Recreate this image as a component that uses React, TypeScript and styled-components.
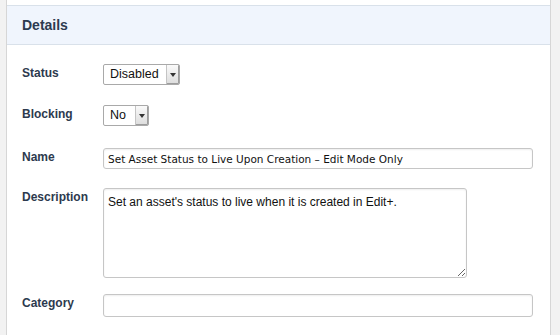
import React from 'react'
import styled, { createGlobalStyle } from 'styled-components'

const GlobalStyle = createGlobalStyle`
  html, body {
    margin: 0;
    padding: 0;
    background: #f2f2f2;
  }
`

const Panel = styled.div`
  margin-left: 6px;
  width: 545px;
  min-height: 335px;
  box-sizing: border-box;
  background: #ffffff;
  border-left: 1px solid #d6d6d6;
  border-right: 1px solid #d6d6d6;
  padding-top: 5px;
  font-family: "Liberation Sans", Arial, sans-serif;
`

const Header = styled.div`
  height: 38px;
  line-height: 38px;
  padding-left: 15px;
  background: #f0f5fd;
  border-top: 1px solid #d9e1ea;
  border-bottom: 1px solid #d9e1ea;
  font-size: 14px;
  font-weight: bold;
  color: #2c3a50;
`

const Form = styled.div`
  padding: 19px 0 0 15px;
`

const Row = styled.div<{ $space: number }>`
  display: flex;
  align-items: flex-start;
  margin-bottom: ${p => p.$space}px;
`

const Label = styled.div`
  width: 81px;
  flex: none;
  padding-top: 2px;
  font-size: 12px;
  font-weight: bold;
  color: #2d3a4e;
  line-height: 14px;
`

const SelectBox = styled.div<{ $width: number }>`
  display: flex;
  width: ${p => p.$width}px;
  height: 21px;
  box-sizing: border-box;
  border: 1px solid #a9a9a9;
  border-radius: 2px;
  background: #fff;
  overflow: hidden;
`

const SelectText = styled.div`
  flex: 1;
  padding-left: 6px;
  font-family: "Liberation Sans", Arial, sans-serif;
  font-size: 12.5px;
  line-height: 19px;
  color: #111;
`

const ArrowButton = styled.div`
  width: 12px;
  flex: none;
  display: flex;
  align-items: center;
  justify-content: center;
  border-left: 1px solid #c4c4c4;
  background: linear-gradient(#fafafa, #dcdcdc);
  box-shadow: inset -1px -1px 0 #9d9d9d;
`

const Arrow = styled.div`
  width: 0;
  height: 0;
  border-left: 3px solid transparent;
  border-right: 3px solid transparent;
  border-top: 4px solid #333;
  margin-top: 1px;
`

const TextInput = styled.input<{ $height: number }>`
  width: 430px;
  height: ${p => p.$height}px;
  box-sizing: border-box;
  border: 1px solid #c6c6c6;
  border-radius: 3px;
  padding: 0 0 0 4px;
  margin: 0;
  background: #fff;
  box-shadow: inset 0 1px 2px rgba(0, 0, 0, 0.07);
  font-family: "DejaVu Sans", Verdana, sans-serif;
  font-size: 10.5px;
  color: #111;
  outline: none;
`

const TextArea = styled.textarea`
  width: 364px;
  height: 90px;
  box-sizing: border-box;
  border: 1px solid #c6c6c6;
  border-radius: 3px;
  padding: 6px 4px;
  margin: 0;
  background: #fff;
  box-shadow: inset 0 1px 2px rgba(0, 0, 0, 0.07);
  font-family: "Liberation Sans", Arial, sans-serif;
  font-size: 12px;
  line-height: 14px;
  color: #111;
  outline: none;
`

function Select({ value, width }: { value: string; width: number }) {
    return (
        <SelectBox $width={width}>
            <SelectText>{value}</SelectText>
            <ArrowButton><Arrow /></ArrowButton>
        </SelectBox>
    )
}

export default function App() {
    return (
        <>
            <GlobalStyle />
            <Panel>
                <Header>Details</Header>
                <Form>
                    <Row $space={20}>
                        <Label>Status</Label>
                        <Select value="Disabled" width={77} />
                    </Row>
                    <Row $space={22}>
                        <Label>Blocking</Label>
                        <Select value="No" width={46} />
                    </Row>
                    <Row $space={19}>
                        <Label>Name</Label>
                        <TextInput $height={21} readOnly value="Set Asset Status to Live Upon Creation – Edit Mode Only" />
                    </Row>
                    <Row $space={16}>
                        <Label>Description</Label>
                        <TextArea readOnly value="Set an asset's status to live when it is created in Edit+." />
                    </Row>
                    <Row $space={16}>
                        <Label>Category</Label>
                        <TextInput $height={23} readOnly value="" />
                    </Row>
                </Form>
            </Panel>
        </>
    )
}
